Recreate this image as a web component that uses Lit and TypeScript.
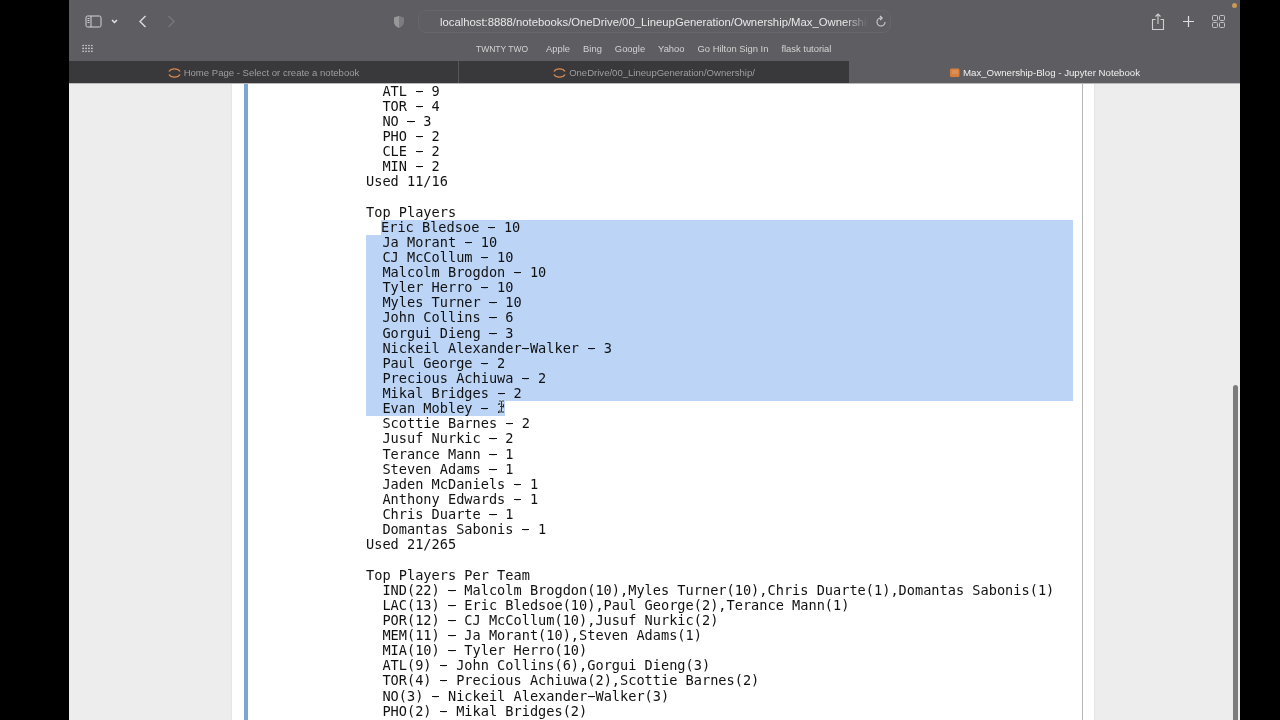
import { LitElement, html, css, svg } from "lit";
import { customElement } from "lit/decorators.js";

const LINES = [
  "  ATL - 9","  TOR - 4","  NO - 3","  PHO - 2","  CLE - 2","  MIN - 2","Used 11/16","","Top Players",
  "  Eric Bledsoe - 10","  Ja Morant - 10","  CJ McCollum - 10","  Malcolm Brogdon - 10","  Tyler Herro - 10","  Myles Turner - 10","  John Collins - 6","  Gorgui Dieng - 3","  Nickeil Alexander-Walker - 3","  Paul George - 2","  Precious Achiuwa - 2","  Mikal Bridges - 2","  Evan Mobley - 2",
  "  Scottie Barnes - 2","  Jusuf Nurkic - 2","  Terance Mann - 1","  Steven Adams - 1","  Jaden McDaniels - 1","  Anthony Edwards - 1","  Chris Duarte - 1","  Domantas Sabonis - 1","Used 21/265","","Top Players Per Team",
  "  IND(22) - Malcolm Brogdon(10),Myles Turner(10),Chris Duarte(1),Domantas Sabonis(1)",
  "  LAC(13) - Eric Bledsoe(10),Paul George(2),Terance Mann(1)",
  "  POR(12) - CJ McCollum(10),Jusuf Nurkic(2)",
  "  MEM(11) - Ja Morant(10),Steven Adams(1)",
  "  MIA(10) - Tyler Herro(10)",
  "  ATL(9) - John Collins(6),Gorgui Dieng(3)",
  "  TOR(4) - Precious Achiuwa(2),Scottie Barnes(2)",
  "  NO(3) - Nickeil Alexander-Walker(3)",
  "  PHO(2) - Mikal Bridges(2)",
];
const SEL_START = 9, SEL_END = 21;

const jupyter = svg`<svg class="tabicon" width="13" height="14" viewBox="0 0 13 14" fill="none" stroke="#d98a4e" stroke-width="1.4"><path d="M1 5.5C3 2 10 2 12 5.5"/><path d="M1 8.5C3 12 10 12 12 8.5"/></svg>`;

const renderLine = (l: string) =>
  l.split("-").map((p, i) => (i === 0 ? p : html`<span class="dash">-</span>${p}`));

@customElement("app-root")
export class AppRoot extends LitElement {
  static styles = css`
    :host { display: block; width: 1280px; height: 720px; background: #000; overflow: hidden; }
    .window { width: 1171px; height: 720px; margin-left: 69px; display: flex; flex-direction: column; position: relative; font-family: "Liberation Sans", Arial, sans-serif; filter: blur(0.3px); }
    .chrome { height: 61px; background: #5e5d61; display: flex; flex-direction: column; flex: none; }
    .toolbar { height: 38px; display: flex; align-items: center; padding: 5px 0 0 16px; box-sizing: border-box; }
    .toolbar svg { flex: none; display: block; }
    .ic-side { margin-right: 9px; }
    .ic-chev { margin-right: 20px; }
    .ic-back { margin-right: 20px; }
    .ic-fwd { margin-right: 217px; }
    .ic-shield { margin-right: 13px; }
    .url { width: 473px; height: 23px; box-sizing: border-box; border: 1px solid #67666a; border-radius: 8px; background: #5f5e62; display: flex; align-items: center; padding: 0 2px 0 21px; color: #e8e8e9; font-size: 11.3px; margin-right: 260px; }
    .url span { flex: 1; white-space: nowrap; -webkit-mask-image: linear-gradient(90deg, #000 405px, transparent 428px); mask-image: linear-gradient(90deg, #000 405px, transparent 428px); }
    .ic-share { margin-right: 17px; }
    .ic-plus { margin-right: 17px; }
    .bookmarks { height: 23px; display: flex; align-items: center; position: relative; padding-left: 13px; padding-bottom: 2px; box-sizing: border-box; }
    .marks { display: flex; align-items: center; gap: 13px; margin-left: 383px; color: #d2d2d3; font-size: 9.4px; white-space: nowrap; }
    .tight { font-size: 8.5px; margin-right: 5px; }
    .tabs { height: 23px; display: flex; flex: none; font-size: 9.55px; box-sizing: border-box; border-bottom: 1px solid #b9b9b9; }
    .tab { display: flex; align-items: center; justify-content: center; gap: 3px; background: #39383b; color: #9f9ea0; box-sizing: border-box; white-space: nowrap; padding-top: 1px; }
    .t1 { width: 390px; border-right: 1px solid #57565a; }
    .t2 { width: 390px; }
    .t3 { flex: 1; background: #5e5d61; color: #f0f0f0; font-size: 9.7px; }
    .page { flex: 1; min-height: 0; background: #ededed; overflow: hidden; padding-left: 163px; }
    .notebook { width: 862px; height: 100%; background: #fff; padding: 0 11px 0 12px; box-sizing: border-box; box-shadow: 0 0 2px #d5d5d5; }
    .cell { height: 100%; border-left: 4px solid #7ca6d4; border-right: 1px solid #b5b5b5; box-sizing: border-box; padding-left: 118px; padding-right: 9px; overflow: hidden; }
    .out { margin-top: -0.5px; font-family: "DejaVu Sans Mono", monospace; font-size: 13.61px; line-height: 15.13px; color: #111; }
    .line { height: 15.13px; white-space: pre; }
    .dash { position: relative; }
    .dash::after { content: ""; position: absolute; left: 0.5px; right: 0.5px; top: 8px; height: 1px; background: currentColor; }
    .sel { background: #bcd5f6; }
    .first { margin-left: 15px; }
    .first .txt { margin-left: -16.4px; }
    .last { width: 139px; }
    .scroll { position: absolute; right: 2px; top: 385px; bottom: -4px; width: 5px; background: #7c7c7c; border-radius: 3px; }
    .dot { position: absolute; right: 3px; top: 3px; width: 5px; height: 5px; border-radius: 50%; background: #c79a55; }
    .cursor { position: absolute; left: 428px; top: 399px; }
  `;

  render() {
    return html`<div class="window">
      <div class="chrome">
        <div class="toolbar">
          <svg class="ic-side" width="17" height="13" viewBox="0 0 17 13" fill="none" stroke="#d4d4d5" stroke-width="1"><rect x="1" y="1" width="15" height="11" rx="1.5"/><path d="M6 1v11"/><path d="M2.5 3.5h2M2.5 5.5h2M2.5 7.5h2" /></svg>
          <svg class="ic-chev" width="7" height="5" viewBox="0 0 7 5" fill="none" stroke="#e4e4e4" stroke-width="1.5"><path d="M1 1l2.5 2.5L6 1"/></svg>
          <svg class="ic-back" width="9" height="13" viewBox="0 0 9 13" fill="none" stroke="#dcdcdd" stroke-width="1.4"><path d="M7.5 1L2 6.5 7.5 12"/></svg>
          <svg class="ic-fwd" width="9" height="13" viewBox="0 0 9 13" fill="none" stroke="#77767a" stroke-width="1.4"><path d="M1.5 1L7 6.5 1.5 12"/></svg>
          <svg class="ic-shield" width="12" height="14" viewBox="0 0 12 14"><path d="M6 1L1 2.5V7c0 3 2.5 5 5 6 2.5-1 5-3 5-6V2.5z" fill="#7d7c80"/><path d="M6 1L1 2.5V7c0 3 2.5 5 5 6z" fill="#98979a"/></svg>
          <div class="url"><span>localhost:8888/notebooks/OneDrive/00_LineupGeneration/Ownership/Max_Ownership</span>
            <svg width="14" height="14" viewBox="0 0 14 14" fill="none" stroke="#d2d2d3" stroke-width="1.1"><path d="M7 3a4 4 0 1 0 4 4"/><path d="M6 1l2.2 2L6 5"/></svg>
          </div>
          <svg class="ic-share" width="14" height="18" viewBox="0 0 14 18" fill="none" stroke="#cfcfd0" stroke-width="1.1"><path d="M4.5 6.5H1.5v10h11v-10H9.5"/><path d="M7 11V1M4.5 3.5L7 1l2.5 2.5"/></svg>
          <svg class="ic-plus" width="13" height="13" viewBox="0 0 13 13" stroke="#dedede" stroke-width="1.2"><path d="M6.5 1v11M1 6.5h11"/></svg>
          <svg width="13" height="13" viewBox="0 0 13 13" fill="none" stroke="#c4c4c5" stroke-width="1"><rect x=".5" y=".5" width="5" height="5" rx="1"/><rect x="7.5" y=".5" width="5" height="5" rx="1"/><rect x=".5" y="7.5" width="5" height="5" rx="1"/><rect x="7.5" y="7.5" width="5" height="5" rx="1"/></svg>
        </div>
        <div class="bookmarks">
          <svg width="11" height="9" viewBox="0 0 12 9" fill="#d8d8d8"><circle cx="1.2" cy="1.2" r=".9"/><circle cx="4.4" cy="1.2" r=".9"/><circle cx="7.6" cy="1.2" r=".9"/><circle cx="10.8" cy="1.2" r=".9"/><circle cx="1.2" cy="4.4" r=".9"/><circle cx="4.4" cy="4.4" r=".9"/><circle cx="7.6" cy="4.4" r=".9"/><circle cx="10.8" cy="4.4" r=".9"/><circle cx="1.2" cy="7.6" r=".9"/><circle cx="4.4" cy="7.6" r=".9"/><circle cx="7.6" cy="7.6" r=".9"/><circle cx="10.8" cy="7.6" r=".9"/></svg>
          <div class="marks"><span class="tight">TWNTY TWO</span><span>Apple</span><span>Bing</span><span>Google</span><span>Yahoo</span><span>Go Hilton Sign In</span><span>flask tutorial</span></div>
        </div>
      </div>
      <div class="tabs">
        <div class="tab t1">${jupyter}<span>Home Page - Select or create a notebook</span></div>
        <div class="tab t2">${jupyter}<span>OneDrive/00_LineupGeneration/Ownership/</span></div>
        <div class="tab t3"><svg width="11" height="11" viewBox="0 0 11 11"><rect x="1" y="1.5" width="9.5" height="8.5" rx="1.5" fill="#d97f3e"/><path d="M3 4h6M3 6h6" stroke="#eba56f" stroke-width=".8"/></svg><span>Max_Ownership-Blog - Jupyter Notebook</span></div>
      </div>
      <div class="page"><div class="notebook"><div class="cell"><div class="out">
        ${LINES.map((l, i) => {
          const sel = i >= SEL_START && i <= SEL_END;
          const cls = "line" + (sel ? " sel" : "") + (i === SEL_START ? " first" : "") + (i === SEL_END ? " last" : "");
          return html`<div class=${cls}><div class="txt">${l ? renderLine(l) : " "}</div></div>`;
        })}
      </div></div></div></div>
      <svg class="cursor" width="9" height="15" viewBox="0 0 9 15" fill="none"><path d="M2 2h1.5q1 0 1 1v9q0 1-1 1H2M7 2H5.5q-1 0-1 1M4.5 12q0 1 1 1H7M3 7.5h3" stroke="#d6e3f5" stroke-width="3" stroke-opacity=".75"/><path d="M2 2h1.5q1 0 1 1v9q0 1-1 1H2M7 2H5.5q-1 0-1 1M4.5 12q0 1 1 1H7M3 7.5h3" stroke="#333" stroke-width="1"/></svg>
      <div class="scroll"></div>
      <div class="dot"></div>
    </div>`;
  }
}
